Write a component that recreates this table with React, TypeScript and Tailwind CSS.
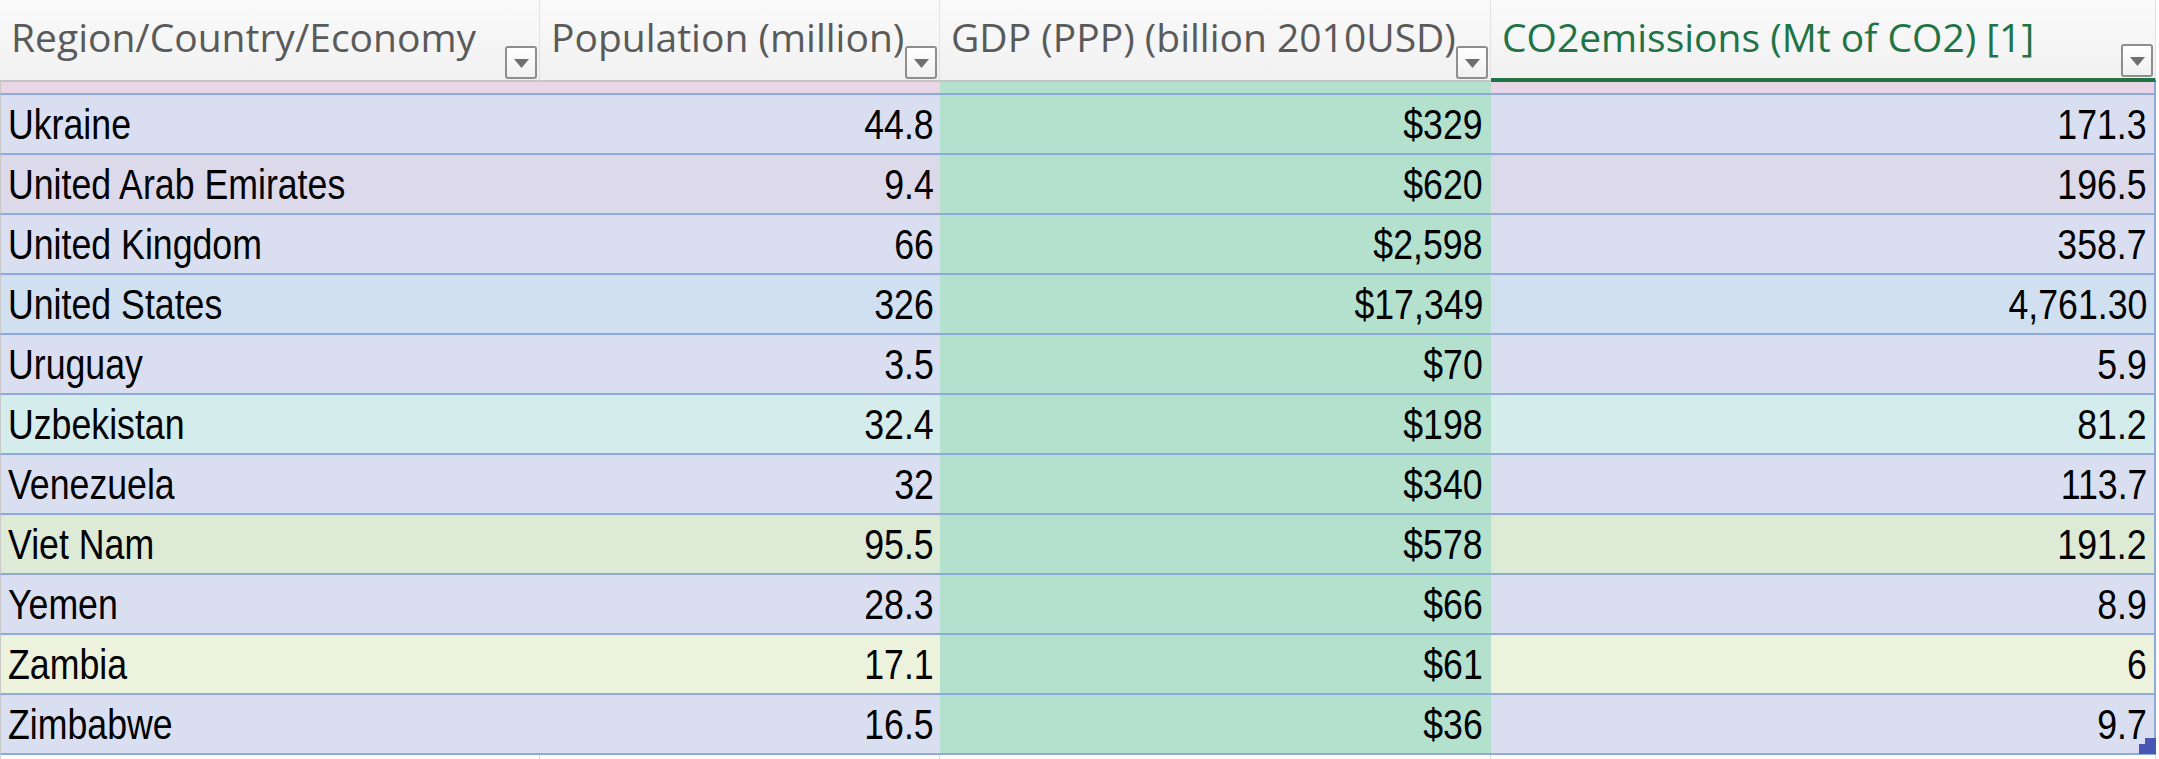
const rows = [
  { name: "Ukraine", pop: "44.8", gdp: "$329", co2: "171.3", bg: "bg-[#d9dff0]" },
  { name: "United Arab Emirates", pop: "9.4", gdp: "$620", co2: "196.5", bg: "bg-[#dcd9ea]" },
  { name: "United Kingdom", pop: "66", gdp: "$2,598", co2: "358.7", bg: "bg-[#d9dff0]" },
  { name: "United States", pop: "326", gdp: "$17,349", co2: "4,761.30", bg: "bg-[#d1e0f1]" },
  { name: "Uruguay", pop: "3.5", gdp: "$70", co2: "5.9", bg: "bg-[#d9dff0]" },
  { name: "Uzbekistan", pop: "32.4", gdp: "$198", co2: "81.2", bg: "bg-[#d4ecec]" },
  { name: "Venezuela", pop: "32", gdp: "$340", co2: "113.7", bg: "bg-[#d9dff0]" },
  { name: "Viet Nam", pop: "95.5", gdp: "$578", co2: "191.2", bg: "bg-[#dcead6]" },
  { name: "Yemen", pop: "28.3", gdp: "$66", co2: "8.9", bg: "bg-[#d9dff0]" },
  { name: "Zambia", pop: "17.1", gdp: "$61", co2: "6", bg: "bg-[#ecf2dc]" },
  { name: "Zimbabwe", pop: "16.5", gdp: "$36", co2: "9.7", bg: "bg-[#d9dff0]" },
];

const cols = "grid grid-cols-[540px_400px_551px_665px]";

function FilterButton() {
  return (
    <div className="shrink-0 self-end mb-[1px] mr-[2px] w-[32px] h-[33px] box-border border-2 border-[#8e8e8e] rounded-[3px] bg-linear-to-b from-white to-[#f0f0f0] flex items-end justify-center pb-[9px]">
      <svg width="15" height="9" viewBox="0 0 15 9">
        <polygon points="0,0 15,0 7.5,9" fill="#6e6e6e" />
      </svg>
    </div>
  );
}

function HeaderCell({ label, active }: { label: string; active?: boolean }) {
  return (
    <div
      className={
        "h-[82px] box-border flex justify-between border-r border-[#e2e2e2] bg-linear-to-b from-[#fafafa] to-[#f1f1f1] " +
        (active ? "border-b-4 border-b-[#217346] text-[#217346]" : "border-b-2 border-b-[#c4c4c4] text-[#5a5a5a]")
      }
    >
      <span className="pl-[11px] pt-[17px] text-[39px] leading-[39px] whitespace-nowrap overflow-hidden">
        {label}
      </span>
      <FilterButton />
    </div>
  );
}

// narrow body text, like Arial Narrow
function Narrow({ children, right }: { children: React.ReactNode; right?: boolean }) {
  return (
    <span className={"inline-block whitespace-nowrap scale-x-[0.83] " + (right ? "origin-right" : "origin-left")}>
      {children}
    </span>
  );
}

export default function App() {
  return (
    <div className="w-[2159px] h-[759px] bg-white overflow-hidden font-['Liberation_Sans',Arial,sans-serif] text-black">
      <div className={cols + " font-['Open_Sans',sans-serif]"}>
        <HeaderCell label="Region/Country/Economy" />
        <HeaderCell label="Population (million)" />
        <HeaderCell label="GDP (PPP) (billion 2010USD)" />
        <HeaderCell label="CO2emissions (Mt of CO2) [1]" active />
      </div>

      {/* partially hidden row under frozen header */}
      <div className={cols}>
        <div className="h-[13px] box-border border-b-2 border-[#8eaadb] border-l border-l-[#c8c8c8] bg-[#e8d6e7]" />
        <div className="h-[13px] box-border border-b-2 border-[#8eaadb] bg-[#e8d6e7]" />
        <div className="h-[13px] box-border border-b-2 border-[#8eaadb] bg-[#b4e1ce]" />
        <div className="h-[13px] box-border border-b-2 border-[#8eaadb] border-r-2 bg-[#e8d6e7]" />
      </div>

      {rows.map((r, i) => (
        <div key={r.name} className={cols + " text-[43px] leading-[58px]"}>
          <div className={"h-[60px] box-border border-b-2 border-[#8eaadb] border-l border-l-[#c8c8c8] pl-[7px] " + r.bg}>
            <Narrow>{r.name}</Narrow>
          </div>
          <div className={"h-[60px] box-border border-b-2 border-[#8eaadb] pr-[6px] text-right " + r.bg}>
            <Narrow right>{r.pop}</Narrow>
          </div>
          <div className="h-[60px] box-border border-b-2 border-[#8eaadb] pr-[8px] text-right bg-[#b4e1ce]">
            <Narrow right>{r.gdp}</Narrow>
          </div>
          <div className={"relative h-[60px] box-border border-b-2 border-r-2 border-[#8eaadb] pr-[7px] text-right " + r.bg}>
            <Narrow right>{r.co2}</Narrow>
            {i === rows.length - 1 && (
              <svg className="absolute right-[-2px] bottom-[-1px]" width="17" height="16" viewBox="0 0 17 16">
                <path d="M0 6H6V0H17V16H0Z" fill="#4858b2" />
              </svg>
            )}
          </div>
        </div>
      ))}

      <div className={cols + " h-[5px]"}>
        <div className="border-l border-r border-[#d6d6d6]" />
        <div className="border-r border-[#d6d6d6]" />
        <div className="border-r border-[#d6d6d6]" />
        <div className="border-r border-[#d6d6d6]" />
      </div>
    </div>
  );
}
